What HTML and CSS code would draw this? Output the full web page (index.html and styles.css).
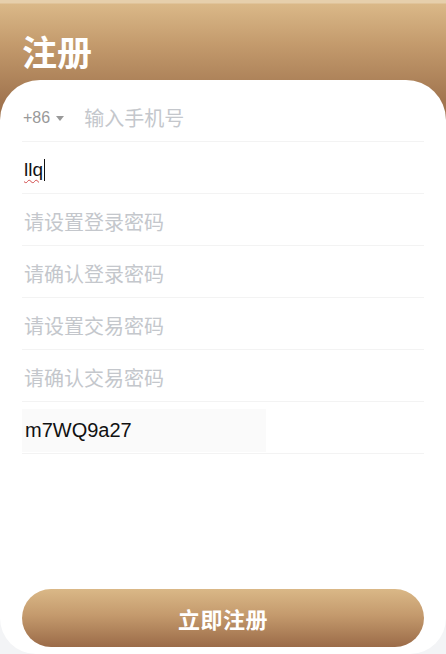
FILE: index.html
```html
<!DOCTYPE html>
<html lang="zh-CN">
<head>
<meta charset="utf-8">
<title>注册</title>
<link rel="stylesheet" href="styles.css">
</head>
<body>
<div class="page">
  <header class="header">
    <h1 class="title">注册</h1>
  </header>
  <main class="card">
    <form class="form">
      <div class="row">
        <div class="code">+86<span class="arrow"></span></div>
        <input class="field" type="tel" placeholder="输入手机号">
      </div>
      <div class="row">
        <div class="value"><span class="typo">llq</span><span class="caret"></span></div>
      </div>
      <div class="row">
        <input class="field" type="password" placeholder="请设置登录密码">
      </div>
      <div class="row">
        <input class="field" type="password" placeholder="请确认登录密码">
      </div>
      <div class="row">
        <input class="field" type="password" placeholder="请设置交易密码">
      </div>
      <div class="row">
        <input class="field" type="password" placeholder="请确认交易密码">
      </div>
      <div class="row row-captcha">
        <input class="field captcha" type="text" value="m7WQ9a27">
      </div>
    </form>
    <button class="submit" type="button">立即注册</button>
  </main>
</div>
</body>
</html>
```
FILE: styles.css
```css
* { box-sizing: border-box; }
html, body { margin: 0; padding: 0; }
body {
  background: #f3f4f6;
  font-family: "Liberation Sans", "Noto Sans CJK SC", sans-serif;
}
.page {
  display: flex;
  flex-direction: column;
  min-height: 654px;
}
.header {
  height: 120px;
  padding: 32px 22px 0;
  background: linear-gradient(180deg, #e6cfac 0, #e6cfac 3px, #dab888 4px, #c39a6c 45px, #a27650 100px, #9c6f4a 120px);
}
.title {
  margin: 0;
  font-family: "Noto Sans CJK SC", sans-serif;
  font-size: 35px;
  line-height: 38px;
  font-weight: 700;
  color: #ffffff;
}
.card {
  flex: 1;
  margin-top: -40px;
  background: #ffffff;
  border-radius: 40px 40px 36px 36px;
  padding: 10px 22px 7px;
  display: flex;
  flex-direction: column;
}
.form {
  display: flex;
  flex-direction: column;
  margin: 0;
}
.row {
  height: 52px;
  display: flex;
  align-items: center;
  border-bottom: 1px solid #f3f3f3;
}
.code {
  display: flex;
  align-items: center;
  font-size: 16px;
  color: #999999;
  padding-left: 1px;
  padding-top: 5px;
  margin-right: 18px;
}
.arrow {
  width: 0;
  height: 0;
  margin-left: 6px;
  margin-top: 1px;
  border-left: 4.5px solid transparent;
  border-right: 4.5px solid transparent;
  border-top: 5px solid #999999;
}
.field {
  flex: 1;
  min-width: 0;
  height: 46px;
  border: 0;
  outline: none;
  background: transparent;
  padding: 7px 0 0 2px;
  font-family: "Liberation Sans", "Noto Sans CJK SC", sans-serif;
  font-size: 20px;
  color: #111111;
}
.field::placeholder {
  color: #c4c7cc;
  font-family: "Noto Sans CJK SC", sans-serif;
}
.value {
  display: flex;
  align-items: center;
  padding-left: 2px;
  padding-top: 4px;
  font-size: 19px;
  color: #111111;
}
.typo {
  text-decoration: underline wavy #d24b4b;
  text-decoration-thickness: 1px;
  text-underline-offset: 3px;
}
.caret {
  width: 1px;
  height: 22px;
  background: #111111;
  margin-left: 1px;
}
.row-captcha {
  align-items: flex-end;
  padding-bottom: 1px;
}
.captcha {
  flex: 0 0 244px;
  height: 43px;
  background: #fafafa;
  padding: 0 0 0 3px;
  font-size: 20px;
}
.submit {
  margin-top: auto;
  width: 100%;
  height: 58px;
  border: 0;
  border-radius: 29px;
  background: linear-gradient(180deg, #dab887 0%, #c49a6d 45%, #9b6b48 100%);
  color: #ffffff;
  font-family: "Noto Sans CJK SC", sans-serif;
  font-size: 22px;
  font-weight: 700;
  letter-spacing: 0.5px;
}
```
